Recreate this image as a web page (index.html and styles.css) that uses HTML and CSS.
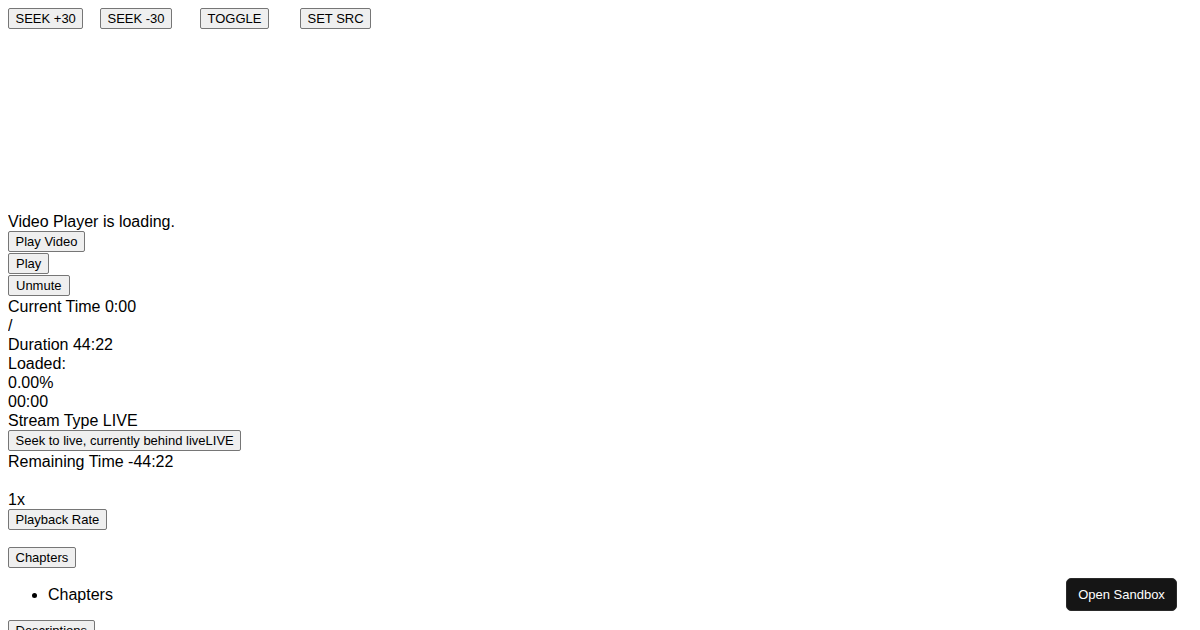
FILE: index.html
```html
<!DOCTYPE html>
<html>
<head>
<meta charset="utf-8">
<link rel="stylesheet" href="styles.css">
</head>
<body>
<div class="controls">
  <button class="btn">SEEK +30</button>
  <button class="btn">SEEK -30</button>
  <button class="btn">TOGGLE</button>
  <button class="btn">SET SRC</button>
</div>
<div class="player">
  <div class="video-area"></div>
  <div class="line">Video Player is loading.</div>
  <div><button class="btn">Play Video</button></div>
  <div><button class="btn wide">Play</button></div>
  <div><button class="btn wide">Unmute</button></div>
  <div class="line">Current Time 0:00</div>
  <div class="line">/</div>
  <div class="line">Duration 44:22</div>
  <div class="line">Loaded:</div>
  <div class="line">0.00%</div>
  <div class="line">00:00</div>
  <div class="line">Stream Type LIVE</div>
  <div><button class="btn">Seek to live, currently behind liveLIVE</button></div>
  <div class="line">Remaining Time -44:22</div>
  <div class="line">&nbsp;</div>
  <div class="line">1x</div>
  <div><button class="btn">Playback Rate</button></div>
  <ul class="menu"></ul>
  <div><button class="btn">Chapters</button></div>
  <ul class="menu"><li>Chapters</li></ul>
  <div><button class="btn">Descriptions</button></div>
</div>
<button class="sandbox">Open Sandbox</button>
</body>
</html>
```
FILE: styles.css
```css
html, body {
  background: #ffffff;
}
body {
  margin: 8px;
  font-family: "Liberation Sans", Arial, sans-serif;
  font-size: 16px;
  color: #000000;
  overflow: hidden;
}
.controls {
  display: grid;
  grid-template-columns: 92px 100px 100px auto;
  justify-items: start;
}
.btn {
  font-family: "Liberation Sans", Arial, sans-serif;
  font-size: 13px;
  height: 21px;
  padding: 1px 6.5px;
  margin: 0;
  background: #efefef;
  color: #000;
  border: 1px solid #767676;
  border-radius: 2px;
  line-height: normal;
  display: inline-block;
  box-sizing: border-box;
  vertical-align: top;
}
.btn.wide {
  padding: 1px 7px;
}
.player div .btn {
  margin-bottom: 1px;
}
.video-area {
  height: 183px;
}
.line {
  line-height: 19px;
  height: 19px;
}
.menu {
  margin: 16px 0;
  padding-left: 40px;
  line-height: 19px;
}
.sandbox {
  position: fixed;
  right: 23px;
  bottom: 19px;
  width: 111px;
  height: 33px;
  background: #151515;
  color: #ffffff;
  border: 1px solid #2a2a2a;
  border-radius: 5px;
  font-family: "Liberation Sans", Arial, sans-serif;
  font-size: 13px;
  padding: 0 0 1px 0;
}
```
